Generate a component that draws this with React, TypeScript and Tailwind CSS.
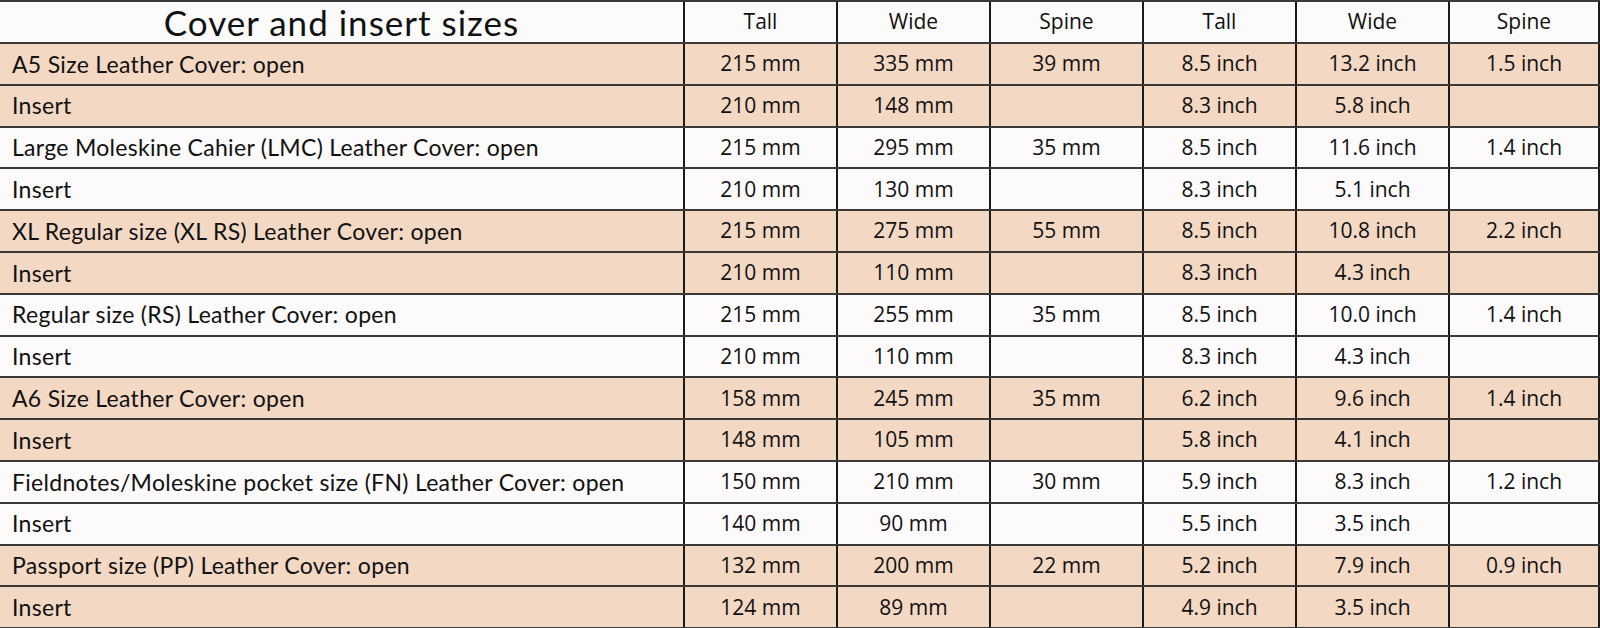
import React from "react";

type Row = {
  label: string;
  tall: string;
  wide: string;
  spine: string;
  tallIn: string;
  wideIn: string;
  spineIn: string;
  peach: boolean;
};

const rows: Row[] = [
  { label: "A5 Size Leather Cover: open", tall: "215 mm", wide: "335 mm", spine: "39 mm", tallIn: "8.5 inch", wideIn: "13.2 inch", spineIn: "1.5 inch", peach: true },
  { label: "Insert", tall: "210 mm", wide: "148 mm", spine: "", tallIn: "8.3 inch", wideIn: "5.8 inch", spineIn: "", peach: true },
  { label: "Large Moleskine Cahier (LMC) Leather Cover: open", tall: "215 mm", wide: "295 mm", spine: "35 mm", tallIn: "8.5 inch", wideIn: "11.6 inch", spineIn: "1.4 inch", peach: false },
  { label: "Insert", tall: "210 mm", wide: "130 mm", spine: "", tallIn: "8.3 inch", wideIn: "5.1 inch", spineIn: "", peach: false },
  { label: "XL Regular size (XL RS) Leather Cover: open", tall: "215 mm", wide: "275 mm", spine: "55 mm", tallIn: "8.5 inch", wideIn: "10.8 inch", spineIn: "2.2 inch", peach: true },
  { label: "Insert", tall: "210 mm", wide: "110 mm", spine: "", tallIn: "8.3 inch", wideIn: "4.3 inch", spineIn: "", peach: true },
  { label: "Regular size (RS) Leather Cover: open", tall: "215 mm", wide: "255 mm", spine: "35 mm", tallIn: "8.5 inch", wideIn: "10.0 inch", spineIn: "1.4 inch", peach: false },
  { label: "Insert", tall: "210 mm", wide: "110 mm", spine: "", tallIn: "8.3 inch", wideIn: "4.3 inch", spineIn: "", peach: false },
  { label: "A6 Size Leather Cover: open", tall: "158 mm", wide: "245 mm", spine: "35 mm", tallIn: "6.2 inch", wideIn: "9.6 inch", spineIn: "1.4 inch", peach: true },
  { label: "Insert", tall: "148 mm", wide: "105 mm", spine: "", tallIn: "5.8 inch", wideIn: "4.1 inch", spineIn: "", peach: true },
  { label: "Fieldnotes/Moleskine pocket size (FN) Leather Cover: open", tall: "150 mm", wide: "210 mm", spine: "30 mm", tallIn: "5.9 inch", wideIn: "8.3 inch", spineIn: "1.2 inch", peach: false },
  { label: "Insert", tall: "140 mm", wide: "90 mm", spine: "", tallIn: "5.5 inch", wideIn: "3.5 inch", spineIn: "", peach: false },
  { label: "Passport size (PP) Leather Cover: open", tall: "132 mm", wide: "200 mm", spine: "22 mm", tallIn: "5.2 inch", wideIn: "7.9 inch", spineIn: "0.9 inch", peach: true },
  { label: "Insert", tall: "124 mm", wide: "89 mm", spine: "", tallIn: "4.9 inch", wideIn: "3.5 inch", spineIn: "", peach: true },
];

const headers = ["Tall", "Wide", "Spine", "Tall", "Wide", "Spine"];

const rowGrid =
  "grid grid-cols-[685px_153px_153px_153px_153px_153px_1fr] border-b-2 border-[#3c3836]";
const cell =
  "flex items-center justify-center border-r-2 border-[#1a1a1a] text-[21px] text-[#111] font-['Open_Sans',sans-serif]";
const labelFont = "font-['Lato','Noto_Sans',sans-serif]";

const App = () => {
  return (
    <div className="w-[1600px] h-[628px] overflow-hidden bg-white">
      {/* Header */}
      <div className={`${rowGrid} h-[44px] border-t-2 bg-[#fcfbfb]`}>
        <div
          className={`flex items-center justify-center border-r-2 border-[#1a1a1a] text-[35px] leading-none tracking-[1px] text-[#111] ${labelFont}`}
        >
          Cover and insert sizes
        </div>
        {headers.map((h, i) => (
          <div key={i} className={`${cell} ${i === 5 ? "border-r-0" : ""}`}>
            {h}
          </div>
        ))}
      </div>

      {/* Rows */}
      {rows.map((r, idx) => (
        <div
          key={idx}
          className={`${rowGrid} h-[41.8px] ${r.peach ? "bg-[#f3d8c4]" : "bg-[#fcfafa]"}`}
        >
          <div
            className={`flex items-center pl-3 border-r-2 border-[#1a1a1a] text-[23px] tracking-[0.3px] text-[#111] whitespace-nowrap ${labelFont}`}
          >
            {r.label}
          </div>
          <div className={cell}>{r.tall}</div>
          <div className={cell}>{r.wide}</div>
          <div className={cell}>{r.spine}</div>
          <div className={cell}>{r.tallIn}</div>
          <div className={cell}>{r.wideIn}</div>
          <div className={`${cell} border-r-0`}>{r.spineIn}</div>
        </div>
      ))}
    </div>
  );
};

export default App;
